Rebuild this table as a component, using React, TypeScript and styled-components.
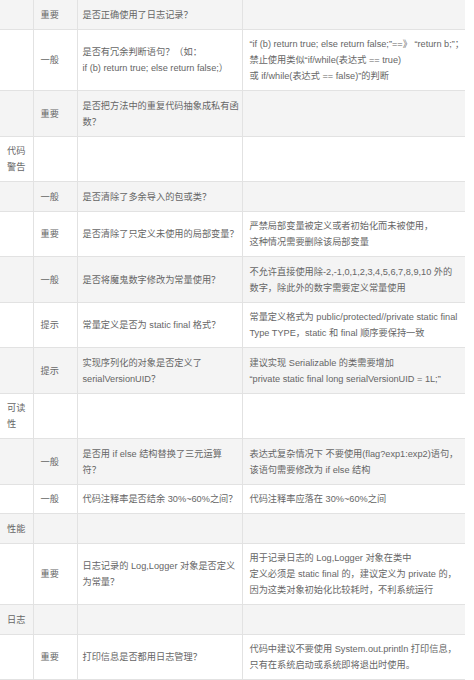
import React from 'react';
import styled, { createGlobalStyle } from 'styled-components';

const GlobalStyle = createGlobalStyle`
  html, body {
    margin: 0;
    padding: 0;
    background: #ffffff;
  }
  body {
    font-family: "Liberation Sans", Arial, "Noto Sans CJK SC", sans-serif;
  }
`;

const Page = styled.div`
  width: 474px;
  height: 680px;
  overflow: hidden;
  background: #ffffff;
`;

const Table = styled.table`
  width: 465px;
  table-layout: fixed;
  border-collapse: collapse;
  font-size: 9.2px;
  line-height: 16px;
  color: #666666;
`;

const Col = styled.col<{ $w: number }>`
  width: ${({ $w }) => $w}px;
`;

const Row = styled.tr<{ $shaded: boolean }>`
  background: ${({ $shaded }) => ($shaded ? '#f4f4f4' : '#ffffff')};
  border-bottom: 1px solid #e2e2e2;
`;

const Cell = styled.td<{ $pad?: number }>`
  padding: 6.5px 2px 6px ${({ $pad }) => $pad ?? 7}px;
  vertical-align: middle;
  border-left: 1px solid #e2e2e2;
  white-space: nowrap;

  &:first-child {
    border-left: none;
  }
`;

type Item = {
  cat?: React.ReactNode;
  level?: string;
  question?: React.ReactNode;
  rule?: React.ReactNode;
};

const rows: Item[] = [
  { level: '重要', question: '是否正确使用了日志记录？' },
  {
    level: '一般',
    question: (
      <>
        是否有冗余判断语句？（如：
        <br />
        if (b) return true; else return false;）
      </>
    ),
    rule: (
      <>
        “if (b) return true; else return false;”==》 “return b;”；
        <br />
        禁止使用类似“if/while(表达式 == true)
        <br />
        或 if/while(表达式 == false)”的判断
      </>
    ),
  },
  {
    level: '重要',
    question: (
      <>
        是否把方法中的重复代码抽象成私有函
        <br />
        数？
      </>
    ),
  },
  {
    cat: (
      <>
        代码
        <br />
        警告
      </>
    ),
  },
  { level: '一般', question: '是否清除了多余导入的包或类？' },
  {
    level: '重要',
    question: '是否清除了只定义未使用的局部变量？',
    rule: (
      <>
        严禁局部变量被定义或者初始化而未被使用，
        <br />
        这种情况需要删除该局部变量
      </>
    ),
  },
  {
    level: '一般',
    question: '是否将魔鬼数字修改为常量使用？',
    rule: (
      <>
        不允许直接使用除-2,-1,0,1,2,3,4,5,6,7,8,9,10 外的
        <br />
        数字，除此外的数字需要定义常量使用
      </>
    ),
  },
  {
    level: '提示',
    question: '常量定义是否为 static final 格式？',
    rule: (
      <>
        常量定义格式为 public/protected//private static final
        <br />
        Type TYPE，static 和 final 顺序要保持一致
      </>
    ),
  },
  {
    level: '提示',
    question: (
      <>
        实现序列化的对象是否定义了
        <br />
        serialVersionUID？
      </>
    ),
    rule: (
      <>
        建议实现 Serializable 的类需要增加
        <br />
        “private static final long serialVersionUID = 1L;”
      </>
    ),
  },
  {
    cat: (
      <>
        可读
        <br />
        性
      </>
    ),
  },
  {
    level: '一般',
    question: (
      <>
        是否用 if else 结构替换了三元运算
        <br />
        符？
      </>
    ),
    rule: (
      <>
        表达式复杂情况下 不要使用(flag?exp1:exp2)语句，
        <br />
        该语句需要修改为 if else 结构
      </>
    ),
  },
  {
    level: '一般',
    question: '代码注释率是否结余 30%~60%之间？',
    rule: '代码注释率应落在 30%~60%之间',
  },
  { cat: '性能' },
  {
    level: '重要',
    question: (
      <>
        日志记录的 Log,Logger 对象是否定义
        <br />
        为常量？
      </>
    ),
    rule: (
      <>
        用于记录日志的 Log,Logger 对象在类中
        <br />
        定义必须是 static final 的，建议定义为 private 的，
        <br />
        因为这类对象初始化比较耗时，不利系统运行
      </>
    ),
  },
  { cat: '日志' },
  {
    level: '重要',
    question: '打印信息是否都用日志管理？',
    rule: (
      <>
        代码中建议不要使用 System.out.println 打印信息，
        <br />
        只有在系统启动或系统即将退出时使用。
      </>
    ),
  },
];

export default function App() {
  return (
    <Page>
      <GlobalStyle />
      <Table>
        <colgroup>
          <Col $w={33} />
          <Col $w={44} />
          <Col $w={165} />
          <Col $w={223} />
        </colgroup>
        <tbody>
          {rows.map((r, i) => (
            <Row key={i} $shaded={i % 2 === 0}>
              <Cell>{r.cat}</Cell>
              <Cell>{r.level}</Cell>
              <Cell $pad={5}>{r.question}</Cell>
              <Cell>{r.rule}</Cell>
            </Row>
          ))}
        </tbody>
      </Table>
    </Page>
  );
}
